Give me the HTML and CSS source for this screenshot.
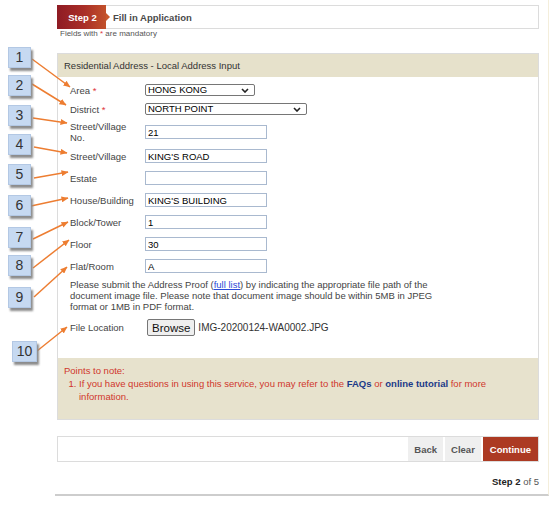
FILE: index.html
```html
<!DOCTYPE html>
<html lang="en">
<head>
<meta charset="utf-8">
<title>Fill in Application</title>
<link rel="stylesheet" href="styles.css">
</head>
<body>
<div class="frame">
  <div class="stepbar">
    <div class="steptab">Step 2</div>
    <svg class="steparrow" width="4" height="8" viewBox="0 0 4 8"><path d="M0 0 L4 4 L0 8 Z" fill="#c9592c"/></svg>
    <div class="steptitle">Fill in Application</div>
  </div>
  <div class="mandatory">Fields with <span class="req">*</span> are mandatory</div>

  <div class="panel">
    <div class="panel-head">Residential Address - Local Address Input</div>
    <div class="panel-body">
      <div class="row row-select">
        <span class="lbl">Area <span class="req">*</span></span>
        <div class="sel sel-area" role="combobox" aria-expanded="false">
          <span class="sel-value">HONG KONG</span>
          <svg class="chev" width="8" height="5" viewBox="0 0 8 5"><path d="M1 1 L4 4 L7 1" fill="none" stroke="#222" stroke-width="1.6"/></svg>
        </div>
      </div>
      <div class="row row-select">
        <span class="lbl">District <span class="req">*</span></span>
        <div class="sel sel-district" role="combobox" aria-expanded="false">
          <span class="sel-value">NORTH POINT</span>
          <svg class="chev" width="8" height="5" viewBox="0 0 8 5"><path d="M1 1 L4 4 L7 1" fill="none" stroke="#222" stroke-width="1.6"/></svg>
        </div>
      </div>
      <div class="row row-tall">
        <label class="lbl">Street/Village<br>No.</label>
        <input class="txt" type="text" value="21">
      </div>
      <div class="row">
        <label class="lbl">Street/Village</label>
        <input class="txt" type="text" value="KING'S ROAD">
      </div>
      <div class="row">
        <label class="lbl">Estate</label>
        <input class="txt" type="text" value="">
      </div>
      <div class="row">
        <label class="lbl">House/Building</label>
        <input class="txt" type="text" value="KING'S BUILDING">
      </div>
      <div class="row">
        <label class="lbl">Block/Tower</label>
        <input class="txt" type="text" value="1">
      </div>
      <div class="row">
        <label class="lbl">Floor</label>
        <input class="txt" type="text" value="30">
      </div>
      <div class="row">
        <label class="lbl">Flat/Room</label>
        <input class="txt" type="text" value="A">
      </div>
      <p class="proof">Please submit the Address Proof (<a href="#" class="link">full list</a>) by indicating the appropriate file path of the document image file. Please note that document image should be within 5MB in JPEG format or 1MB in PDF format.</p>
      <div class="row row-file">
        <label class="lbl">File Location</label>
        <button class="browse" type="button">Browse</button>
        <span class="filename">IMG-20200124-WA0002.JPG</span>
      </div>
    </div>
    <div class="notes">
      <div class="notes-title">Points to note:</div>
      <ol class="notes-list">
        <li>If you have questions in using this service, you may refer to the <b class="strong-link">FAQs</b> or <b class="strong-link">online tutorial</b> for more information.</li>
      </ol>
    </div>
  </div>

  <div class="buttonbar">
    <button class="btn" type="button">Back</button>
    <button class="btn" type="button">Clear</button>
    <button class="btn btn-primary" type="button">Continue</button>
  </div>
  <div class="stepcount"><b>Step 2</b> of 5</div>
</div>

<svg class="annot" width="555" height="505" viewBox="0 0 555 505">
  <defs>
    <marker id="ah" markerWidth="7" markerHeight="6" refX="6.5" refY="3" orient="auto" markerUnits="userSpaceOnUse">
      <path d="M0 0 L7 3 L0 6 Z" fill="#ed7d31"/>
    </marker>
  </defs>
  <g stroke="#ed7d31" stroke-width="1.5" fill="none" marker-end="url(#ah)">
    <line x1="32" y1="59" x2="70" y2="87"/>
    <line x1="32" y1="84" x2="66" y2="105"/>
    <line x1="33" y1="118" x2="67" y2="123"/>
    <line x1="34" y1="147" x2="67" y2="153"/>
    <line x1="34" y1="178" x2="68" y2="172"/>
    <line x1="31" y1="206" x2="68" y2="198"/>
    <line x1="33" y1="239" x2="68" y2="222"/>
    <line x1="33" y1="268" x2="69" y2="240"/>
    <line x1="34" y1="297" x2="67" y2="267"/>
    <line x1="37" y1="351" x2="67" y2="327"/>
  </g>
</svg>
<div class="badge b1">1</div>
<div class="badge b2">2</div>
<div class="badge b3">3</div>
<div class="badge b4">4</div>
<div class="badge b5">5</div>
<div class="badge b6">6</div>
<div class="badge b7">7</div>
<div class="badge b8">8</div>
<div class="badge b9">9</div>
<div class="badge b10">10</div>
</body>
</html>
```

FILE: styles.css
```css
* { box-sizing: border-box; }

html, body {
  margin: 0;
  padding: 0;
  background: #ffffff;
}

body {
  font-family: "Liberation Sans", Arial, sans-serif;
  font-size: 9.5px;
  color: #444;
  width: 555px;
  height: 505px;
  position: relative;
  overflow: hidden;
}

.frame {
  margin-left: 55px;
  width: 494px;
  padding: 5px 9px 6px 2px;
  border-right: 1px solid #f4eedb;
  border-bottom: 2px solid #cdcdcd;
}

/* step header */
.stepbar {
  display: flex;
  align-items: center;
  height: 24px;
  border: 1px solid #dcdcdc;
  background: #fff;
}

.steptab {
  align-self: stretch;
  margin: -1px 0 -1px -1px;
  width: 49px;
  display: flex;
  align-items: center;
  justify-content: center;
  padding-left: 2px;
  background: linear-gradient(90deg, #8e1b24 0%, #a92e27 55%, #c2512b 100%);
  color: #fff;
  font-weight: bold;
  font-size: 9.5px;
}

.steparrow {
  display: block;
  flex-shrink: 0;
}

.steptitle {
  margin-left: 3px;
  font-weight: bold;
  color: #4a4a4a;
  font-size: 9.5px;
}

.mandatory {
  font-size: 8px;
  line-height: 9px;
  padding-left: 3px;
  color: #555;
}

.req { color: #e0383b; }

/* panel */
.panel {
  margin-top: 15px;
  border: 1px solid #dcdcdc;
}

.panel-head {
  height: 23px;
  line-height: 23px;
  background: #e6e1cb;
  padding-left: 6px;
  color: #333;
}

.panel-body {
  padding: 7px 12px 22px 12px;
  background: #fff;
}

.row {
  display: flex;
  align-items: center;
  height: 14px;
}

.row + .row { margin-top: 8px; }
.row-select { height: 12px; }
.row-select + .row-select { margin-top: 7px; }
.row.row-tall { height: 22px; margin-top: 6px; }
.row-tall + .row { margin-top: 6px; }

.lbl {
  width: 75px;
  flex-shrink: 0;
  line-height: 11px;
  color: #444;
}

.sel {
  display: flex;
  align-items: center;
  justify-content: space-between;
  height: 12px;
  padding: 0 5px 0 2px;
  border: 1px solid #767676;
  border-radius: 2px;
  background: #fff;
  color: #000;
  font-size: 9.5px;
  line-height: 10px;
}

.sel-value {
  white-space: nowrap;
}

.chev {
  display: block;
  flex-shrink: 0;
}

.sel-area { width: 110px; }
.sel-district { width: 162px; }

.txt {
  width: 122px;
  height: 14px;
  padding: 0 2px;
  border: 1px solid #a9b9cf;
  background: #fff;
  font-family: "Liberation Sans", Arial, sans-serif;
  font-size: 9.5px;
  color: #000;
  outline: none;
}

.proof {
  margin: 6px 0 0 0;
  width: 375px;
  line-height: 11px;
  color: #444;
}

.link {
  color: #2a4bd7;
  text-decoration: underline;
}

.row.row-file {
  height: 17px;
  margin-top: 7px;
}

.browse {
  height: 17px;
  margin-left: 2px;
  padding: 0 4px;
  font-family: "Liberation Sans", Arial, sans-serif;
  font-size: 11.5px;
  color: #111;
  background: #efefef;
  border: 1px solid #767676;
  border-radius: 2px;
}

.filename {
  margin-left: 3px;
  font-size: 10px;
  color: #333;
}

/* notes */
.notes {
  background: #e7e2cd;
  padding: 6px 6px 16px 6px;
  line-height: 13px;
  color: #d0362c;
}

.notes-list {
  margin: 0;
  padding-left: 15px;
  max-width: 430px;
}

.strong-link {
  color: #1b3a88;
  font-weight: bold;
}

/* buttons */
.buttonbar {
  margin-top: 16px;
  height: 26px;
  border: 1px solid #dcdcdc;
  display: flex;
  justify-content: flex-end;
  gap: 2px;
}

.btn {
  height: 24px;
  padding: 0 6px;
  border: 0;
  background: #efefef;
  color: #555;
  font-family: "Liberation Sans", Arial, sans-serif;
  font-weight: bold;
  font-size: 9.5px;
}

.btn-primary {
  background: #ac3a23;
  color: #fff;
  padding: 0 7px;
}

.stepcount {
  margin-top: 14px;
  line-height: 12px;
  text-align: right;
  color: #555;
}

.stepcount b { color: #222; }

/* annotations overlay */
.annot {
  position: absolute;
  left: 0;
  top: 0;
  pointer-events: none;
}

.badge {
  position: absolute;
  width: 23px;
  height: 21px;
  left: 8px;
  background: #c6d9f1;
  border: 1px solid #b3c8e4;
  box-shadow: 2px 3px 2px #8c8c8c;
  color: #333;
  font-size: 14px;
  line-height: 19px;
  text-align: center;
}

.b1 { top: 47px; }
.b2 { top: 75px; }
.b3 { top: 105px; }
.b4 { top: 134px; }
.b5 { top: 164px; }
.b6 { top: 195px; }
.b7 { top: 227px; }
.b8 { top: 255px; }
.b9 { top: 287px; }
.b10 { top: 341px; left: 12px; width: 25px; }
```
